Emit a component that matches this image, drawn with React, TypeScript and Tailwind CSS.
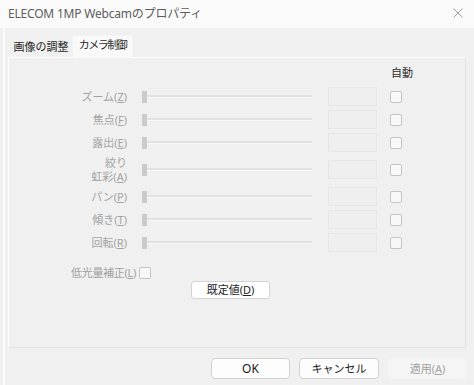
import React from 'react';

const font = { fontFamily: '"Noto Sans", "Noto Sans CJK JP", sans-serif' };

type Row = { label: React.ReactNode; tall?: boolean };

const Mn: React.FC<{ k: string }> = ({ k }) => (
  <span>(<span className="underline underline-offset-[1px]">{k}</span>)</span>
);

const rows: Row[] = [
  { label: <>ズーム<Mn k="Z" /></> },
  { label: <>焦点<Mn k="F" /></> },
  { label: <>露出<Mn k="E" /></> },
  { label: <><span className="block">絞り</span><span className="block">虹彩<Mn k="A" /></span></>, tall: true },
  { label: <>パン<Mn k="P" /></> },
  { label: <>傾き<Mn k="T" /></> },
  { label: <>回転<Mn k="R" /></> },
];

const Check = () => (
  <div className="w-[12px] h-[12px] rounded-[2px] border border-[#c4c4c4] bg-[#f8f8f8]" />
);

const SliderRow: React.FC<{ row: Row }> = ({ row }) => (
  <div className={`flex items-center ${row.tall ? 'h-[31px]' : 'h-[23px]'}`}>
    <div className="w-[118px] text-right text-[11px] leading-[14px] text-[#a3a3a3]">{row.label}</div>
    {/* slider */}
    <div className="ml-[15px] w-[170px] flex items-center">
      <div className="w-[5px] h-[12px] bg-[#cbcbcb]" />
      <div className="flex-1 flex flex-col">
        <div className="h-[2px] bg-[#e1e1e1]" />
        <div className="h-[1px] bg-[#f8f8f8]" />
      </div>
    </div>
    {/* value box */}
    <div className="ml-[16px] w-[49px] h-[19px] border border-[#e6e6e6] bg-[#efefef]" />
    <div className="ml-[13px]">
      <Check />
    </div>
  </div>
);

export default function App() {
  return (
    <div className="w-[474px] h-[385px] bg-[#f0f0f0] flex flex-col overflow-hidden" style={font}>
      {/* title bar */}
      <div className="h-[28px] bg-[#fafafa] flex items-center justify-between pl-[8px] pr-[11px]">
        <span className="text-[12px] text-[#5e5e5e] tracking-[-0.2px]">ELECOM 1MP Webcamのプロパティ</span>
        <svg width="10" height="10" viewBox="0 0 10 10" className="mb-[2px]">
          <path d="M0.5 0.5 L9.5 9.5 M9.5 0.5 L0.5 9.5" stroke="#9c9c9c" strokeWidth="1" />
        </svg>
      </div>

      <div className="flex-1 flex flex-col ml-[3px] border-l-2 border-[#fafafa] pl-[3px]">
        {/* tabs */}
        <div className="mt-[7px] flex h-[22px] pl-[2px]">
          <div className="mt-[2px] w-[62px] h-[20px] flex items-center justify-center text-[11px] text-[#1e1e1e]">
            画像の調整
          </div>
          <div className="w-[61px] h-[23px] bg-[#f9f9f9] border-x border-t border-[#f4f4f4] flex items-center justify-center pb-[3px] text-[11px] text-[#2a2a2a] tracking-[-1.5px] relative z-10">
            カメラ制御
          </div>
        </div>

        {/* panel */}
        <div className="w-[458px] h-[291px] border border-t-white border-l-white border-r-[#e2e2e2] border-b-[#e2e2e2] flex flex-col">
          <div className="h-[27px] pt-[8px] flex">
            <div className="ml-[382px] text-[11px] leading-[13px] text-[#2a2a2a]">自動</div>
          </div>
          {rows.map((r, i) => (
            <SliderRow key={i} row={r} />
          ))}
          <div className="mt-[12px] h-[14px] flex items-center ml-[62px]">
            <span className="text-[11px] leading-[14px] text-[#a0a0a0] tracking-[-0.3px]">
              低光量補正<Mn k="L" />
            </span>
            <div className="ml-[3px]">
              <Check />
            </div>
          </div>
          <div className="mt-[1px] ml-[182px] flex">
            <button className="w-[79px] h-[18px] bg-white border border-[#d4d4d4] rounded-[3px] text-[11px] leading-[14px] text-[#222]">
              既定値<Mn k="D" />
            </button>
          </div>
        </div>

        {/* bottom buttons */}
        <div className="mt-[10px] flex pl-[203px] gap-[9px]">
          <button className="w-[79px] h-[21px] bg-[#fdfdfd] border border-[#d2d2d2] rounded-[4px] text-[12px] leading-[14px] text-[#1a1a1a]">
            OK
          </button>
          <button className="w-[80px] h-[21px] bg-[#fdfdfd] border border-[#d2d2d2] rounded-[4px] text-[11px] leading-[14px] text-[#1a1a1a]">
            キャンセル
          </button>
          <button className="w-[79px] h-[21px] bg-[#f5f5f5] border border-[#f3f3f3] rounded-[4px] text-[11px] leading-[14px] text-[#a2a2a2]">
            適用<Mn k="A" />
          </button>
        </div>
      </div>
    </div>
  );
}
